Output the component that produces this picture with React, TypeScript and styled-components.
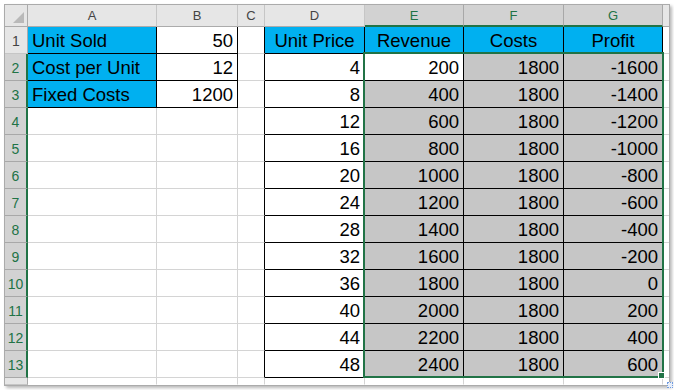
import React from "react";
import styled, { createGlobalStyle } from "styled-components";

const GREEN = "#217346";
const HEAD_W = 23;
const HEAD_H = 22;
const ROW_H = 27;
const COLS = ["A", "B", "C", "D", "E", "F", "G"];
const WIDTHS = [129, 81, 27, 100, 99, 100, 99];

type Fill = "none" | "blue" | "sel";
type Align = "left" | "right" | "center";

interface ICell {
  text?: string | number;
  fill: Fill;
  align: Align;
}

const GlobalStyle = createGlobalStyle`
  html, body {
    margin: 0;
    padding: 0;
    background: #fff;
  }
  body {
    font-family: "Liberation Sans", Arial, sans-serif;
  }
  *, *::before, *::after {
    box-sizing: border-box;
  }
`;

const Page = styled.div`
  position: relative;
  width: 674px;
  height: 390px;
  padding: 4px 0 0 4px;
`;

const Frame = styled.div`
  position: relative;
  width: 666px;
  height: 382px;
  border: 1px solid #ababab;
  box-shadow: 2px 2px 3px rgba(0, 0, 0, 0.28);
  overflow: hidden;
  background: #fff;
`;

const Sheet = styled.div`
  display: grid;
  grid-template-columns: ${HEAD_W}px ${WIDTHS.map((w) => `${w}px`).join(" ")} 1fr;
  grid-template-rows: ${HEAD_H}px repeat(13, ${ROW_H}px) 1fr;
  width: 100%;
  height: 100%;
`;

const Corner = styled.div`
  position: relative;
  background: #e6e6e6;
  border-right: 1px solid #ababab;
  border-bottom: 1px solid #ababab;
  &::after {
    content: "";
    position: absolute;
    right: 3px;
    bottom: 3px;
    width: 0;
    height: 0;
    border-style: solid;
    border-width: 0 0 11px 11px;
    border-color: transparent transparent #b9b9b9 transparent;
  }
`;

const ColHead = styled.div<{ $selected?: boolean }>`
  display: flex;
  align-items: center;
  justify-content: center;
  font-size: 13px;
  color: ${(p) => (p.$selected ? GREEN : "#444")};
  background: ${(p) => (p.$selected ? "#d2d2d2" : "#e6e6e6")};
  border-right: 1px solid ${(p) => (p.$selected ? "#a8a8a8" : "#c6c6c6")};
  border-bottom: ${(p) => (p.$selected ? `2px solid ${GREEN}` : "1px solid #ababab")};
`;

const RowHead = styled.div<{ $selected?: boolean }>`
  display: flex;
  align-items: flex-end;
  justify-content: center;
  padding-bottom: 4px;
  font-size: 14px;
  color: ${(p) => (p.$selected ? GREEN : "#444")};
  background: ${(p) => (p.$selected ? "#d2d2d2" : "#e6e6e6")};
  border-bottom: 1px solid ${(p) => (p.$selected ? "#a8a8a8" : "#c6c6c6")};
  border-right: ${(p) => (p.$selected ? `2px solid ${GREEN}` : "1px solid #ababab")};
`;

const fills: Record<Fill, string> = {
  none: "#fff",
  blue: "#00b0f0",
  sel: "#c6c6c6",
};

const Cell = styled.div<{
  $fill: Fill;
  $align: Align;
  $edgeR: string;
  $edgeB: string;
}>`
  display: flex;
  align-items: flex-end;
  justify-content: ${(p) =>
    p.$align === "right" ? "flex-end" : p.$align === "center" ? "center" : "flex-start"};
  padding: 0 4px 2px 4px;
  font-size: 18.5px;
  line-height: 21px;
  color: #000;
  white-space: nowrap;
  overflow: hidden;
  background: ${(p) => fills[p.$fill]};
  border-right: 1px solid ${(p) => p.$edgeR};
  border-bottom: 1px solid ${(p) => p.$edgeB};
`;

const Selection = styled.div`
  position: absolute;
  left: ${HEAD_W + 129 + 81 + 27 + 100 - 2}px;
  top: ${HEAD_H + ROW_H - 2}px;
  width: 301px;
  height: 326px;
  border: 2px solid ${GREEN};
  pointer-events: none;
`;

const FillHandle = styled.div`
  position: absolute;
  left: 653px;
  top: 367px;
  width: 7px;
  height: 7px;
  background: ${GREEN};
  border: 1px solid #fff;
`;

const QuickMark = styled.div`
  position: absolute;
  left: 667px;
  top: 382px;
  width: 6px;
  height: 6px;
  background: #e8eef8;
  border: 1px dotted #6f9be0;
`;

const inRange = (r: number, c: number) =>
  (r >= 1 && r <= 3 && c >= 0 && c <= 1) || (r >= 1 && r <= 13 && c >= 3 && c <= 6);

const labels = ["Unit Sold", "Cost per Unit", "Fixed Costs"];
const inputs = [50, 12, 1200];

const cellAt = (r: number, c: number): ICell => {
  if (c === 0 && r <= 3) return { text: labels[r - 1], fill: "blue", align: "left" };
  if (c === 1 && r <= 3) return { text: inputs[r - 1], fill: "none", align: "right" };
  if (c >= 3 && c <= 6 && r === 1) {
    const heads = ["Unit Price", "Revenue", "Costs", "Profit"];
    return { text: heads[c - 3], fill: "blue", align: "center" };
  }
  if (c >= 3 && c <= 6 && r <= 13) {
    const price = (r - 1) * 4;
    const revenue = price * 50;
    const costs = 12 * 50 + 1200;
    const values = [price, revenue, costs, revenue - costs];
    const selected = c >= 4 && !(r === 2 && c === 4);
    return { text: values[c - 3], fill: selected ? "sel" : "none", align: "right" };
  }
  return { fill: "none", align: "left" };
};

const GRID = "#d4d4d4";

const App = () => {
  const rows = Array.from({ length: 14 }, (_, i) => i + 1);
  const cols = Array.from({ length: 8 }, (_, i) => i);
  return (
    <Page>
      <GlobalStyle />
      <Frame>
        <Sheet>
          <Corner />
          {COLS.map((name, i) => (
            <ColHead key={name} $selected={i >= 4}>
              {name}
            </ColHead>
          ))}
          <ColHead />
          {rows.map((r) => (
            <React.Fragment key={r}>
              <RowHead $selected={r >= 2 && r <= 13}>{r <= 13 ? r : ""}</RowHead>
              {cols.map((c) => {
                const cell = cellAt(r, c);
                const black = inRange(r, c);
                const edgeR =
                  c === 7 ? "transparent" : black || inRange(r, c + 1) ? "#000" : GRID;
                const edgeB =
                  r === 14 ? "transparent" : black || inRange(r + 1, c) ? "#000" : GRID;
                return (
                  <Cell
                    key={c}
                    $fill={r <= 13 ? cell.fill : "none"}
                    $align={cell.align}
                    $edgeR={edgeR}
                    $edgeB={edgeB}
                  >
                    {r <= 13 ? cell.text : ""}
                  </Cell>
                );
              })}
            </React.Fragment>
          ))}
        </Sheet>
        <Selection />
        <FillHandle />
      </Frame>
      <QuickMark />
    </Page>
  );
};

export default App;
